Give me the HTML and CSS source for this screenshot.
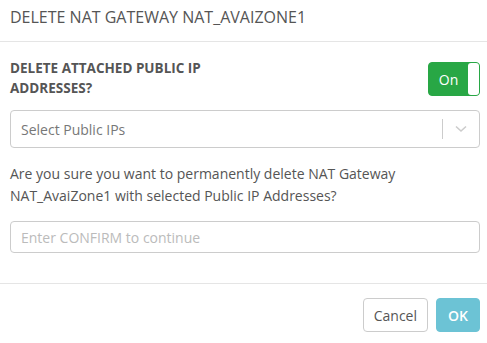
FILE: index.html
```html
<!DOCTYPE html>
<html lang="en">
<head>
    <meta charset="UTF-8">
    <meta name="viewport" content="width=device-width, initial-scale=1.0">
    <title>Delete NAT Gateway</title>
    <link rel="stylesheet" href="styles.css">
</head>
<body>

    <!-- 弹窗 -->
    <div class="modal">
        <div class="modal-header">
            <h4>DELETE NAT GATEWAY NAT_AVAIZONE1</h4>
        </div>

        <div class="modal-body">
            <div class="switch-row">
                <label class="switch-label">DELETE ATTACHED PUBLIC IP<br>ADDRESSES?</label>
                <div class="switch">
                    <span class="switch-text">On</span>
                    <span class="switch-knob"></span>
                </div>
            </div>

            <div class="select">
                <span class="select-placeholder">Select Public IPs</span>
                <span class="select-sep"></span>
                <span class="select-arrow">
                    <svg width="12" height="8" viewBox="0 0 12 8"><path d="M1 1.5 L6 6 L11 1.5" fill="none" stroke="#ccc" stroke-width="1.6"/></svg>
                </span>
            </div>

            <p class="confirm-text">Are you sure you want to permanently delete NAT Gateway NAT_AvaiZone1 with selected Public IP Addresses?</p>

            <input class="confirm-input" type="text" placeholder="Enter CONFIRM to continue">
        </div>

        <div class="modal-footer">
            <button class="btn btn-cancel">Cancel</button>
            <button class="btn btn-ok">OK</button>
        </div>
    </div>

</body>
</html>
```

FILE: styles.css
```css
* {
    margin: 0;
    padding: 0;
    box-sizing: border-box;
}
body {
    font-family: "Open Sans", Arial, sans-serif;
    background-color: #fff;
    color: #555;
    width: 487px;
    height: 343px;
    overflow: hidden;
}
.modal {
    display: flex;
    flex-direction: column;
    height: 343px;
}
.modal-header {
    height: 42px;
    padding: 6px 10px 0;
    border-bottom: 1px solid #e5e5e5;
}
.modal-header h4 {
    font-size: 16px;
    font-weight: 400;
    color: #555;
    line-height: 22px;
}
.modal-body {
    padding: 16px 7px 0 10px;
    height: 242px;
    border-bottom: 1px solid #e5e5e5;
}
.switch-row {
    display: flex;
    justify-content: space-between;
    align-items: flex-start;
}
.switch-label {
    font-size: 13.5px;
    font-weight: 700;
    color: #555;
    line-height: 20px;
}
.switch {
    width: 52px;
    height: 34px;
    margin-top: 4px;
    background-color: #28a745;
    border: 1px solid #28a745;
    border-radius: 4px;
    display: flex;
    align-items: center;
    justify-content: space-between;
}
.switch-text {
    color: #fff;
    font-size: 14px;
    flex: 1;
    text-align: center;
}
.switch-knob {
    width: 11px;
    height: 32px;
    background-color: #fff;
    border-radius: 3px;
}
.select {
    margin-top: 12px;
    height: 38px;
    border: 1px solid #ccc;
    border-radius: 4px;
    display: flex;
    align-items: center;
    padding-left: 10px;
}
.select-placeholder {
    flex: 1;
    font-size: 14px;
    color: #777;
}
.select-sep {
    width: 1px;
    height: 20px;
    background-color: #ccc;
}
.select-arrow {
    width: 36px;
    display: flex;
    justify-content: center;
}
.confirm-text {
    margin-top: 15px;
    font-size: 14px;
    line-height: 22px;
    color: #555;
    padding-right: 60px;
}
.confirm-input {
    display: block;
    width: 100%;
    height: 32px;
    margin-top: 14px;
    border: 1px solid #ccc;
    border-radius: 4px;
    padding: 0 10px;
    font-family: "Open Sans", Arial, sans-serif;
    font-size: 14px;
    color: #555;
}
.confirm-input::placeholder {
    color: #bbb;
}
.modal-footer {
    display: flex;
    justify-content: flex-end;
    gap: 8px;
    padding: 14px 7px 0 0;
}
.btn {
    height: 34px;
    padding: 0 11px;
    border-radius: 4px;
    font-family: "Open Sans", Arial, sans-serif;
    font-size: 14px;
    cursor: pointer;
}
.btn-cancel {
    background-color: #fff;
    border: 1px solid #ccc;
    color: #555;
    padding: 0 10px;
}
.btn-ok {
    background-color: #6cc3d5;
    border: 1px solid #6cc3d5;
    color: #fff;
    font-weight: 600;
}
```
